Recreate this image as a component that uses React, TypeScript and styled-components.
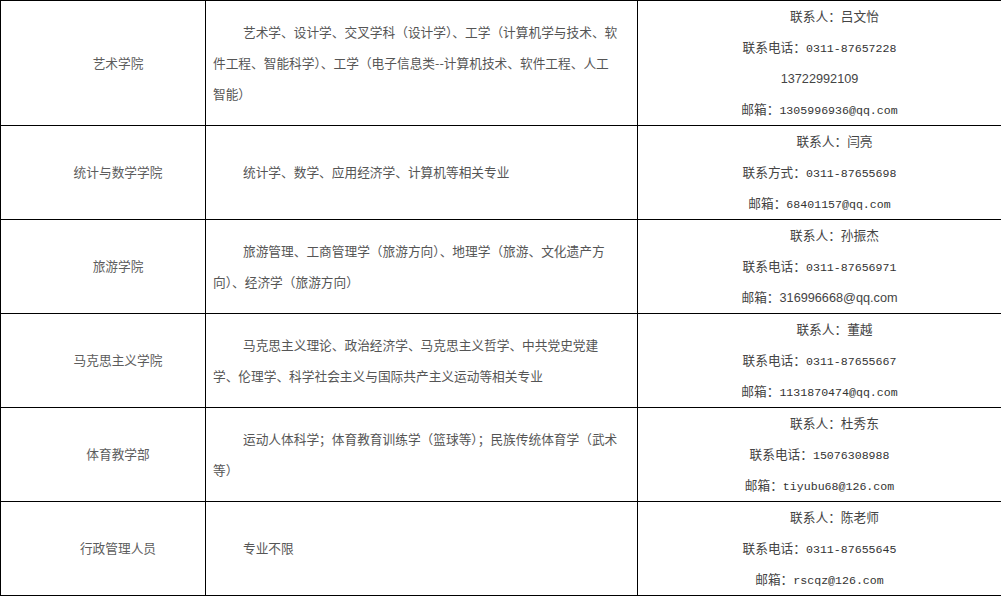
import React from "react";
import styled, { createGlobalStyle } from "styled-components";

const GlobalStyle = createGlobalStyle`
  html, body {
    margin: 0;
    padding: 0;
    background: #ffffff;
  }
  body {
    font-family: "Noto Sans CJK SC", "Liberation Sans", sans-serif;
  }
`;

const CJK = `"Noto Sans CJK SC", "Liberation Sans", sans-serif`;

const Table = styled.table`
  width: 1001px;
  table-layout: fixed;
  border-collapse: collapse;
  font-family: ${CJK};
  font-size: 12.7px;
  line-height: 31px;
`;

const Cell = styled.td<{ $align: "left" | "center"; $color: string }>`
  border: 1px solid #000;
  padding: 0 7px;
  vertical-align: middle;
  text-align: ${(p) => p.$align};
  color: ${(p) => p.$color};
`;

// each line is a fixed 31px strip; the text sits a touch high in it
const Para = styled.p<{ $indent?: boolean }>`
  margin: 0;
  height: 29px;
  padding-bottom: 2px;
  line-height: 29px;
  white-space: nowrap;
  text-indent: ${(p) => (p.$indent ? "30px" : "0")};
`;

const Value = styled.span<{ $mono?: boolean }>`
  font-family: ${(p) =>
    p.$mono ? `"Liberation Mono", monospace` : `"Liberation Sans", sans-serif`};
  font-size: ${(p) => (p.$mono ? "11.6px" : "12.7px")};
  color: ${(p) => (p.$mono ? "#333" : "inherit")};
  line-height: 1;
`;

type Contact = { label: string; value: string; mono?: boolean };

type Row = {
  name: string;
  majors: string[];
  person: string;
  contacts: Contact[];
};

const ROWS: Row[] = [
  {
    name: "艺术学院",
    majors: [
      "艺术学、设计学、交叉学科（设计学）、工学（计算机学与技术、软",
      "件工程、智能科学）、工学（电子信息类--计算机技术、软件工程、人工",
      "智能）",
    ],
    person: "吕文怡",
    contacts: [
      { label: "联系电话：", value: "0311-87657228", mono: true },
      { label: "", value: "13722992109" },
      { label: "邮箱：", value: "1305996936@qq.com", mono: true },
    ],
  },
  {
    name: "统计与数学学院",
    majors: ["统计学、数学、应用经济学、计算机等相关专业"],
    person: "闫亮",
    contacts: [
      { label: "联系方式：", value: "0311-87655698", mono: true },
      { label: "邮箱：", value: "68401157@qq.com", mono: true },
    ],
  },
  {
    name: "旅游学院",
    majors: [
      "旅游管理、工商管理学（旅游方向）、地理学（旅游、文化遗产方",
      "向）、经济学（旅游方向）",
    ],
    person: "孙振杰",
    contacts: [
      { label: "联系电话：", value: "0311-87656971", mono: true },
      { label: "邮箱：", value: "316996668@qq.com" },
    ],
  },
  {
    name: "马克思主义学院",
    majors: [
      "马克思主义理论、政治经济学、马克思主义哲学、中共党史党建",
      "学、伦理学、科学社会主义与国际共产主义运动等相关专业",
    ],
    person: "董越",
    contacts: [
      { label: "联系电话：", value: "0311-87655667", mono: true },
      { label: "邮箱：", value: "1131870474@qq.com", mono: true },
    ],
  },
  {
    name: "体育教学部",
    majors: ["运动人体科学；体育教育训练学（篮球等）；民族传统体育学（武术", "等）"],
    person: "杜秀东",
    contacts: [
      { label: "联系电话：", value: "15076308988", mono: true },
      { label: "邮箱：", value: "tiyubu68@126.com", mono: true },
    ],
  },
  {
    name: "行政管理人员",
    majors: ["专业不限"],
    person: "陈老师",
    contacts: [
      { label: "联系电话：", value: "0311-87655645", mono: true },
      { label: "邮箱：", value: "rscqz@126.com", mono: true },
    ],
  },
];

export default function App() {
  return (
    <>
      <GlobalStyle />
      <Table>
        <colgroup>
          <col style={{ width: 205 }} />
          <col style={{ width: 432 }} />
          <col style={{ width: 364 }} />
        </colgroup>
        <tbody>
          {ROWS.map((row) => (
            <tr key={row.name}>
              <Cell $align="center" $color="#5c5c5c">
                <Para $indent>{row.name}</Para>
              </Cell>
              <Cell $align="left" $color="#555">
                {row.majors.map((line, i) => (
                  <Para key={i} $indent={i === 0}>
                    {line}
                  </Para>
                ))}
              </Cell>
              <Cell $align="center" $color="#444">
                <Para $indent>联系人：{row.person}</Para>
                {row.contacts.map((c, i) => (
                  <Para key={i}>
                    {c.label}
                    <Value $mono={c.mono}>{c.value}</Value>
                  </Para>
                ))}
              </Cell>
            </tr>
          ))}
        </tbody>
      </Table>
    </>
  );
}
